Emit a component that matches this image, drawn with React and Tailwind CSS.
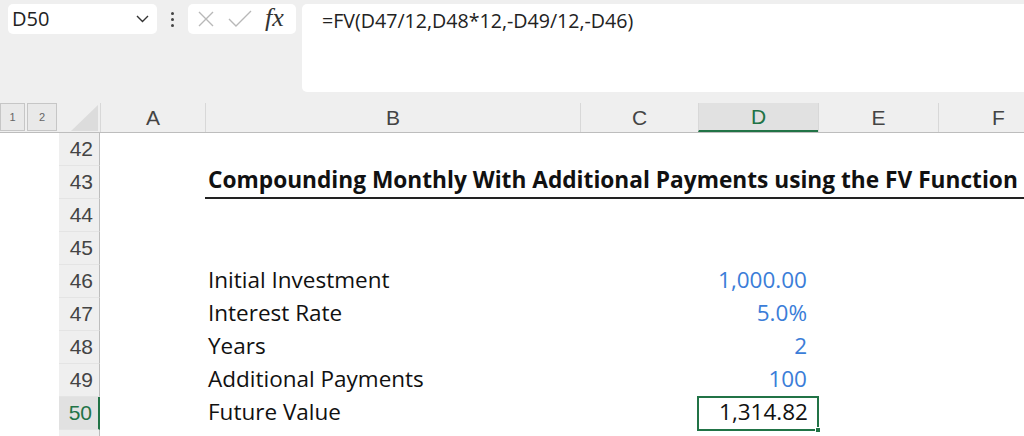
import React from 'react'

const cols = [
  { key: 'A', w: 'w-[105px]' },
  { key: 'B', w: 'w-[375px]' },
  { key: 'C', w: 'w-[118px]' },
  { key: 'D', w: 'w-[120px]' },
  { key: 'E', w: 'w-[120px]' },
  { key: 'F', w: 'w-[120px]' },
]

const rows = [
  { n: 42 },
  { n: 43, title: 'Compounding Monthly With Additional Payments using the FV Function' },
  { n: 44 },
  { n: 45 },
  { n: 46, label: 'Initial Investment', value: '1,000.00' },
  { n: 47, label: 'Interest Rate', value: '5.0%' },
  { n: 48, label: 'Years', value: '2' },
  { n: 49, label: 'Additional Payments', value: '100' },
  { n: 50, label: 'Future Value', value: '1,314.82', selected: true },
  { n: 51 },
]

const cellFont = "font-['Open_Sans',sans-serif]"
const headFont = "font-['Liberation_Sans',Arial,sans-serif]"

const Toolbar = () => (
  <div className="flex items-start gap-0 bg-[#efefef] h-[100px] pt-[4px] pl-[8px]">
    {/* Name box */}
    <div className="flex items-center justify-between w-[149px] h-[30px] bg-white rounded-[5px] pl-[4px] pr-[8px]">
      <span className={`${cellFont} text-[20px] text-[#222]`}>D50</span>
      <svg width="13" height="8" viewBox="0 0 13 8" fill="none" stroke="#333" strokeWidth="1.4">
        <path d="M1 1l5.5 5.5L12 1" />
      </svg>
    </div>
    {/* dots */}
    <div className="flex flex-col items-center justify-center gap-[3px] w-[31px] h-[30px]">
      <span className="w-[3px] h-[3px] rounded-full bg-[#444]" />
      <span className="w-[3px] h-[3px] rounded-full bg-[#444]" />
      <span className="w-[3px] h-[3px] rounded-full bg-[#444]" />
    </div>
    {/* X check fx */}
    <div className="flex items-center w-[108px] h-[30px] bg-white rounded-[5px] pl-[9px] gap-[13px]">
      <svg width="18" height="18" viewBox="0 0 18 18" stroke="#b8b8b8" strokeWidth="1.4" fill="none">
        <path d="M2 2l14 14M16 2L2 16" />
      </svg>
      <svg width="24" height="18" viewBox="0 0 24 18" stroke="#b8b8b8" strokeWidth="1.4" fill="none">
        <path d="M1 9l7 7L23 1" />
      </svg>
      <span className="font-['Liberation_Serif',serif] italic text-[26px] leading-none text-[#333] -mt-[3px]">fx</span>
    </div>
    {/* Formula bar */}
    <div className="ml-[6px] flex-1 h-[88px] bg-white rounded-l-[5px] pl-[20px] pt-[2px]">
      <span className={`${cellFont} text-[19.6px] text-[#222]`}>=FV(D47/12,D48*12,-D49/12,-D46)</span>
    </div>
  </div>
)

const HeaderRow = () => (
  <div className="flex h-[33px] bg-[#efefef] pt-[3px] border-b border-[#bdbdbd]">
    <div className="flex w-[59px] shrink-0 h-[28px] gap-[2px]">
      <div className="w-[25px] border border-[#c6c6c6] bg-[#e9e9e9] flex items-center justify-center text-[11px] text-[#666] font-['Liberation_Sans',sans-serif]">1</div>
      <div className="w-[30px] border border-[#c6c6c6] bg-[#e9e9e9] flex items-center justify-center text-[11px] text-[#666] font-['Liberation_Sans',sans-serif]">2</div>
    </div>
    <div className="w-[41px] shrink-0 flex items-end justify-end pr-[2px] pb-[1px]">
      <svg width="27" height="26" viewBox="0 0 27 26">
        <path d="M27 0V26H0Z" fill="#dcdcdc" />
      </svg>
    </div>
    {cols.map(c => (
      <div
        key={c.key}
        className={`${c.w} shrink-0 flex items-center justify-center border-l border-[#d8d8d8] ${headFont} text-[21px] ${
          c.key === 'D' ? 'bg-[#e1e1e1] text-[#217346] border-b-2 border-b-[#217346]' : 'text-[#444]'
        }`}
      >
        {c.key}
      </div>
    ))}
  </div>
)

const Row = ({ r }) => (
  <div className="flex h-[33px]">
    <div className="w-[59px] shrink-0 bg-white" />
    <div
      className={`w-[41px] shrink-0 flex items-center justify-end pr-[6px] border-b ${headFont} text-[21px] ${
        r.selected
          ? 'bg-[#e1e1e1] text-[#217346] border-r-2 border-r-[#217346] border-b-[#e4e4e4]'
          : 'bg-[#efefef] text-[#444] border-r border-r-[#bdbdbd] border-b-[#e4e4e4]'
      }`}
    >
      {r.n}
    </div>
    <div className="w-[105px] shrink-0" />
    <div
      className={`w-[375px] shrink-0 flex items-center pl-[3px] pb-[3px] ${cellFont} text-[22.5px] text-[#111] whitespace-nowrap ${
        r.title ? 'border-b-2 border-[#222]' : ''
      }`}
    >
      {r.title && <span className="font-bold text-[22.7px] relative z-10">{r.title}</span>}
      {r.label}
    </div>
    <div className={`w-[118px] shrink-0 ${r.title ? 'border-b-2 border-[#222]' : ''}`} />
    <div
      className={`w-[120px] shrink-0 flex items-center justify-end pb-[3px] ${cellFont} text-[22.5px] relative ${
        r.title ? 'border-b-2 border-[#222]' : ''
      } ${r.selected ? 'border-2 border-[#217346] text-[#111] pr-[9px] -ml-[1px] w-[122px] -mt-[1px] h-[35px]' : 'text-[#3b7dd8] pr-[11px]'}`}
    >
      {r.value}
      {r.selected && <span className="absolute -right-[4px] -bottom-[4px] w-[6px] h-[6px] bg-[#217346] border border-white" />}
    </div>
    <div className={`w-[120px] shrink-0 ${r.title ? 'border-b-2 border-[#222]' : ''}`} />
    <div className={`w-[120px] shrink-0 ${r.title ? 'border-b-2 border-[#222]' : ''}`} />
  </div>
)

export default function App() {
  return (
    <div className="w-[1024px] h-[436px] overflow-hidden bg-white">
      <Toolbar />
      <HeaderRow />
      {rows.map(r => (
        <Row key={r.n} r={r} />
      ))}
    </div>
  )
}
